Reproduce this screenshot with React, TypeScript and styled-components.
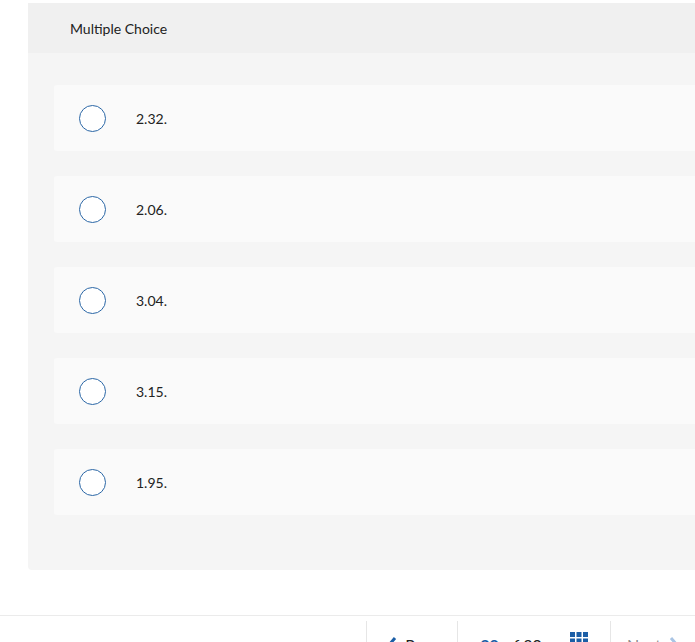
import React from 'react'
import styled, { createGlobalStyle } from 'styled-components'

const GlobalStyle = createGlobalStyle`
  html, body {
    margin: 0;
    padding: 0;
    overflow: hidden;
    background: #ffffff;
    font-family: 'Lato', 'Open Sans', sans-serif;
    color: #212121;
  }
`

const Page = styled.div`
  width: 695px;
  height: 642px;
  overflow: hidden;
  padding-top: 3px;
  box-sizing: border-box;
`

const Card = styled.div`
  margin-left: 28px;
  width: 720px;
  border-radius: 0 0 4px 4px;
  background: #f5f5f5;
`

const CardHeader = styled.div`
  height: 50px;
  display: flex;
  align-items: center;
  padding-left: 42px;
  background: #f0f0f0;
  font-size: 14px;
  color: #222;
`

const OptionList = styled.div`
  display: flex;
  flex-direction: column;
  gap: 25px;
  padding: 32px 0 55px 26px;
`

const Option = styled.label`
  display: flex;
  align-items: center;
  height: 66px;
  padding-left: 25px;
  background: #fafafa;
  border-radius: 3px 0 0 3px;
  font-size: 14px;
  color: #222;
  cursor: pointer;
`

const Radio = styled.span`
  width: 25px;
  height: 25px;
  border: 1.5px solid #2b67a6;
  border-radius: 50%;
  background: #fff;
  margin-right: 30px;
  flex-shrink: 0;
`

const Footer = styled.div`
  margin-top: 45px;
  border-top: 1px solid #ebebeb;
  display: flex;
  justify-content: flex-end;
  padding-top: 5px;
  height: 60px;
`

const NavCell = styled.div<{ width: number }>`
  width: ${({ width }) => width}px;
  border-left: 1px solid #e6e6e6;
  display: flex;
  align-items: flex-start;
  justify-content: center;
  gap: 8px;
  padding-top: 14px;
  box-sizing: border-box;
  font-size: 16px;
  color: #222;
`

const NavText = styled.span<{ muted?: boolean }>`
  color: ${({ muted }) => (muted ? '#8a8a8a' : '#222')};
`

const PageNum = styled.span`
  color: #1b5ea6;
  font-weight: 700;
`

const PageOf = styled.span`
  margin-left: 6px;
  margin-right: 20px;
`

const options = ['2.32.', '2.06.', '3.04.', '3.15.', '1.95.']

const Chevron = ({ dir, color }: { dir: 'left' | 'right'; color: string }) => (
  <svg width="10" height="16" viewBox="0 0 10 16" style={{ marginTop: 2 }}>
    <path
      d={dir === 'left' ? 'M8 1 L2 8 L8 15' : 'M2 1 L8 8 L2 15'}
      fill="none"
      stroke={color}
      strokeWidth="3"
    />
  </svg>
)

const GridIcon = () => (
  <svg width="18" height="18" viewBox="0 0 18 18" style={{ marginTop: -3 }}>
    {[0, 6.5, 13].map((x) =>
      [0, 6.5, 13].map((y) => (
        <rect key={`${x}-${y}`} x={x} y={y} width="5" height="5" fill="#1b5ea6" />
      )),
    )}
  </svg>
)

const App = () => {
  return (
    <Page>
      <GlobalStyle />
      <Card>
        <CardHeader>Multiple Choice</CardHeader>
        <OptionList>
          {options.map((opt) => (
            <Option key={opt}>
              <Radio />
              {opt}
            </Option>
          ))}
        </OptionList>
      </Card>
      <Footer>
        <NavCell width={91}>
          <Chevron dir="left" color="#1b5ea6" />
          <NavText>Prev</NavText>
        </NavCell>
        <NavCell width={153}>
          <span>
            <PageNum>20</PageNum>
            <PageOf>of 30</PageOf>
          </span>
          <GridIcon />
        </NavCell>
        <NavCell width={85}>
          <NavText muted>Next</NavText>
          <Chevron dir="right" color="#a9c4e4" />
        </NavCell>
      </Footer>
    </Page>
  )
}

export default App
